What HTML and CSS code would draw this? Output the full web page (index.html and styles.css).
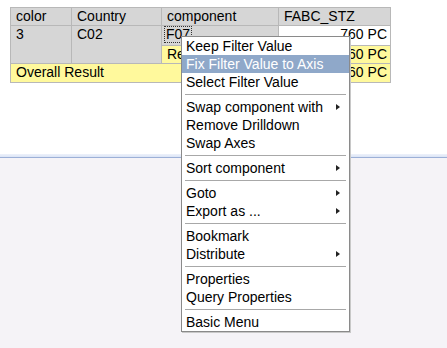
FILE: index.html
```html
<!DOCTYPE html>
<html lang="en">

<head>
  <meta charset="UTF-8">
  <title>Query Result</title>
  <link rel="stylesheet" href="styles.css">
</head>

<body>
  <div class="report">
    <table class="result">
      <tr class="head">
        <th class="c1">color</th>
        <th class="c2">Country</th>
        <th class="c3">component</th>
        <th class="c4">FABC_STZ</th>
      </tr>
      <tr class="r1">
        <td class="key" rowspan="2">3</td>
        <td class="key" rowspan="2">C02</td>
        <td class="key"><span class="focus">F07</span></td>
        <td class="val">760 PC</td>
      </tr>
      <tr class="r2">
        <td class="sum">Result</td>
        <td class="sum val">760 PC</td>
      </tr>
      <tr class="r3">
        <td class="sum" colspan="3">Overall Result</td>
        <td class="sum val">760 PC</td>
      </tr>
    </table>
  </div>
  <div class="band"></div>
  <div class="lower"></div>

  <ul class="menu">
    <li>Keep Filter Value</li>
    <li class="active">Fix Filter Value to Axis</li>
    <li>Select Filter Value</li>
    <li class="sep"></li>
    <li class="sub">Swap component with</li>
    <li>Remove Drilldown</li>
    <li>Swap Axes</li>
    <li class="sep"></li>
    <li class="sub">Sort component</li>
    <li class="sep"></li>
    <li class="sub">Goto</li>
    <li class="sub">Export as ...</li>
    <li class="sep"></li>
    <li>Bookmark</li>
    <li class="sub">Distribute</li>
    <li class="sep"></li>
    <li>Properties</li>
    <li>Query Properties</li>
    <li class="sep"></li>
    <li>Basic Menu</li>
  </ul>
</body>

</html>
```

FILE: styles.css
```css
body {
  margin: 0;
  font-family: "Liberation Sans", Arial, sans-serif;
  font-size: 14px;
  color: #000;
  background-color: #fff;
  height: 348px;
  display: flex;
  flex-direction: column;
}

.report {
  height: 147px;
  padding: 7px 0 0 10px;
}

.result {
  border-collapse: collapse;
  table-layout: fixed;
  width: 381px;
}

.result th,
.result td {
  border: 1px solid #b8b8b8;
  padding: 0 3px 0 5px;
  text-align: left;
  vertical-align: top;
  font-weight: normal;
  line-height: 17px;
  white-space: nowrap;
  overflow: hidden;
}

.result .c1 { width: 52px; }
.result .c2 { width: 81px; }
.result .c3 { width: 108px; }

.result .head th {
  background-color: #d6d6d6;
  height: 17px;
}

.result .r1 td {
  height: 19px;
}

.result .r2 td {
  height: 16px;
}

.result .r3 td {
  height: 18px;
}

.result .key {
  background-color: #d6d6d6;
}

.result .focus {
  display: inline-block;
  margin: 1px 0 0 -2px;
  padding: 0 1px;
  line-height: 15px;
  outline: 1px dotted #333;
}

.result .val {
  text-align: right;
  background-color: #fff;
}

.result .sum {
  background-color: #fff99c;
}

.band {
  height: 3px;
  background: linear-gradient(#eef2fb, #dbe4f5);
  border-bottom: 1px solid #9cb0d7;
}

.lower {
  flex: 1;
  background-color: #f5f3f7;
}

.menu {
  position: absolute;
  top: 36px;
  left: 181px;
  width: 167px;
  margin: 0;
  padding: 0;
  list-style: none;
  background-color: #fff;
  border: 1px solid #8a8a8a;
  box-shadow: 1px 1px 0 #c8c8c8;
}

.menu li {
  position: relative;
  height: 18px;
  line-height: 18px;
  padding-left: 4px;
  white-space: nowrap;
}

.menu li.active {
  background-color: #8fa8c9;
  color: #fff;
}

.menu li.sep {
  height: 7px;
  padding: 0;
}

.menu li.sep::after {
  content: "";
  position: absolute;
  left: 3px;
  right: 3px;
  top: 3px;
  border-top: 1px solid #a8a8a8;
}

.menu li.sub::after {
  content: "";
  position: absolute;
  right: 9px;
  top: 6px;
  border-left: 4px solid #222;
  border-top: 3px solid transparent;
  border-bottom: 3px solid transparent;
}
```
